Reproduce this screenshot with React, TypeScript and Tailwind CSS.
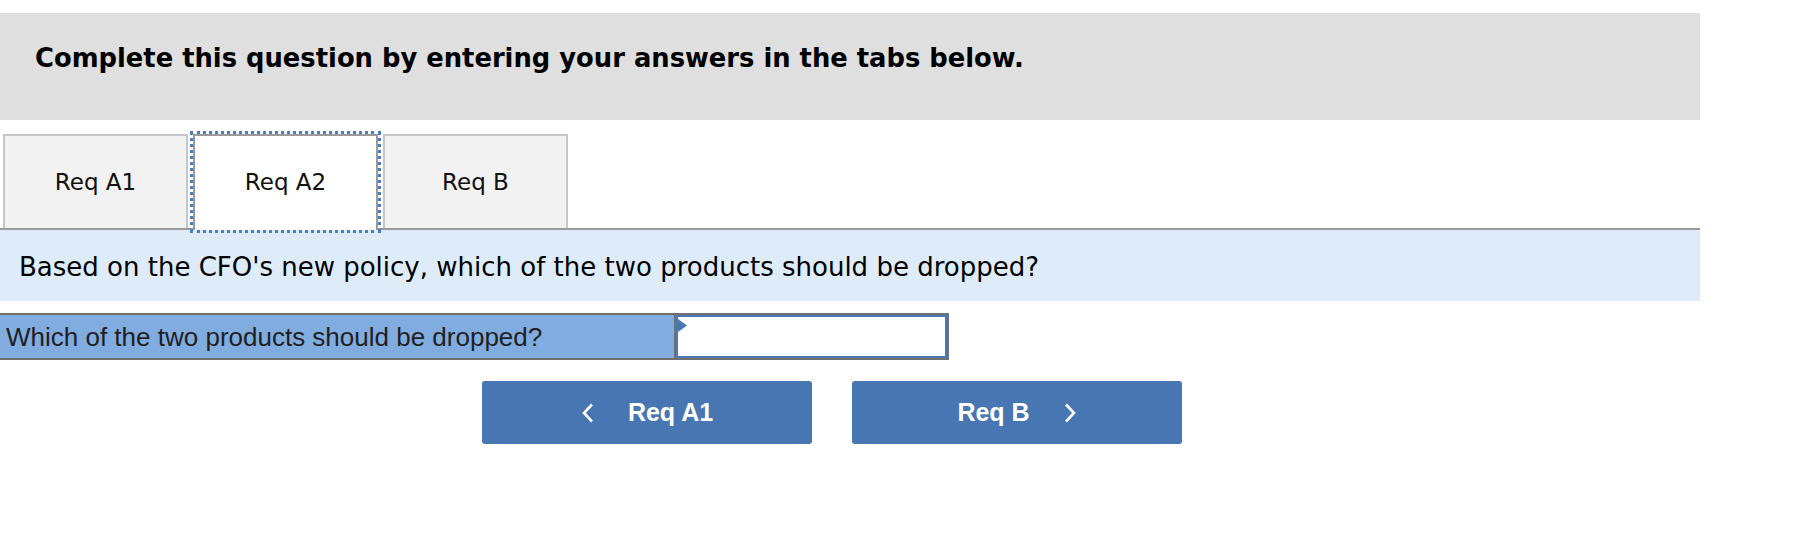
import React from "react";

function ChevronLeft() {
  return (
    <svg width="13" height="20" viewBox="0 0 13 20" fill="none">
      <polyline points="11,1.5 3,10 11,18.5" stroke="white" strokeWidth="2.6" strokeLinecap="butt" strokeLinejoin="miter" />
    </svg>
  );
}

function ChevronRight() {
  return (
    <svg width="13" height="20" viewBox="0 0 13 20" fill="none">
      <polyline points="2,1.5 10,10 2,18.5" stroke="white" strokeWidth="2.6" strokeLinecap="butt" strokeLinejoin="miter" />
    </svg>
  );
}

export default function App() {
  const verdana = { fontFamily: '"DejaVu Sans", Verdana, sans-serif' };
  return (
    <div className="bg-white w-[1803px] h-[554px] overflow-hidden">
      {/* Header */}
      <div
        className="mt-[13px] w-[1700px] h-[107px] bg-[#dfdfdf] pt-[30px] pl-[35px] text-[25.8px] leading-[30px] font-bold text-black"
        style={verdana}
      >
        Complete this question by entering your answers in the tabs below.
      </div>

      {/* Tabs */}
      <div className="mt-[14px] w-[1700px] h-[96px] border-b-2 border-[#999999] flex items-start pl-[3px] gap-[5px]">
        <div
          className="w-[185px] h-[94px] bg-[#f2f2f2] border-2 border-b-0 border-[#c6c6c6] flex items-center justify-center text-[23px] text-[#111]"
          style={verdana}
        >
          Req A1
        </div>
        <div
          className="relative z-10 w-[185px] h-[96px] bg-white border-2 border-b-0 border-[#9a9a9a] outline-[3px] outline-dotted outline-[#4a7dc4] flex items-center justify-center text-[23px] text-[#111]"
          style={verdana}
        >
          <span className="-mt-[2px]">Req A2</span>
        </div>
        <div
          className="w-[185px] h-[94px] bg-[#f2f2f2] border-2 border-b-0 border-[#c6c6c6] flex items-center justify-center text-[23px] text-[#111]"
          style={verdana}
        >
          Req B
        </div>
      </div>

      {/* Instruction band */}
      <div
        className="w-[1700px] h-[71px] bg-[#deebf8] pt-[22px] pl-[19px] text-[26px] leading-[30px] text-black"
        style={verdana}
      >
        Based on the CFO's new policy, which of the two products should be dropped?
      </div>

      {/* Answer row */}
      <div className="mt-[12px] w-[949px] h-[47px] flex border-y-2 border-r-2 border-[#707070]">
        <div
          className="w-[676px] h-full bg-[#81acdf] border-r-2 border-[#707070] pl-[6px] pt-[7px] text-[26px] leading-[30px] text-[#1f1f1f]"
          style={{ fontFamily: '"Liberation Sans", Arial, sans-serif' }}
        >
          Which of the two products should be dropped?
        </div>
        <div className="relative flex-1 h-full bg-white border-2 border-[#4a78b5]">
          <svg className="absolute left-0 top-[2px]" width="10" height="13" viewBox="0 0 10 13">
            <polygon points="0,0 9,6.5 0,13" fill="#4a78b5" />
          </svg>
        </div>
      </div>

      {/* Nav buttons */}
      <div
        className="mt-[21px] ml-[482px] flex gap-[40px]"
        style={{ fontFamily: '"Liberation Sans", Arial, sans-serif' }}
      >
        <button className="w-[330px] h-[63px] rounded-[3px] bg-[#4776b3] flex items-center justify-center gap-[34px] text-white font-bold text-[25px]">
          <ChevronLeft />
          <span>Req A1</span>
        </button>
        <button className="w-[330px] h-[63px] rounded-[3px] bg-[#4776b3] flex items-center justify-center gap-[34px] text-white font-bold text-[25px]">
          <span>Req B</span>
          <ChevronRight />
        </button>
      </div>
    </div>
  );
}
